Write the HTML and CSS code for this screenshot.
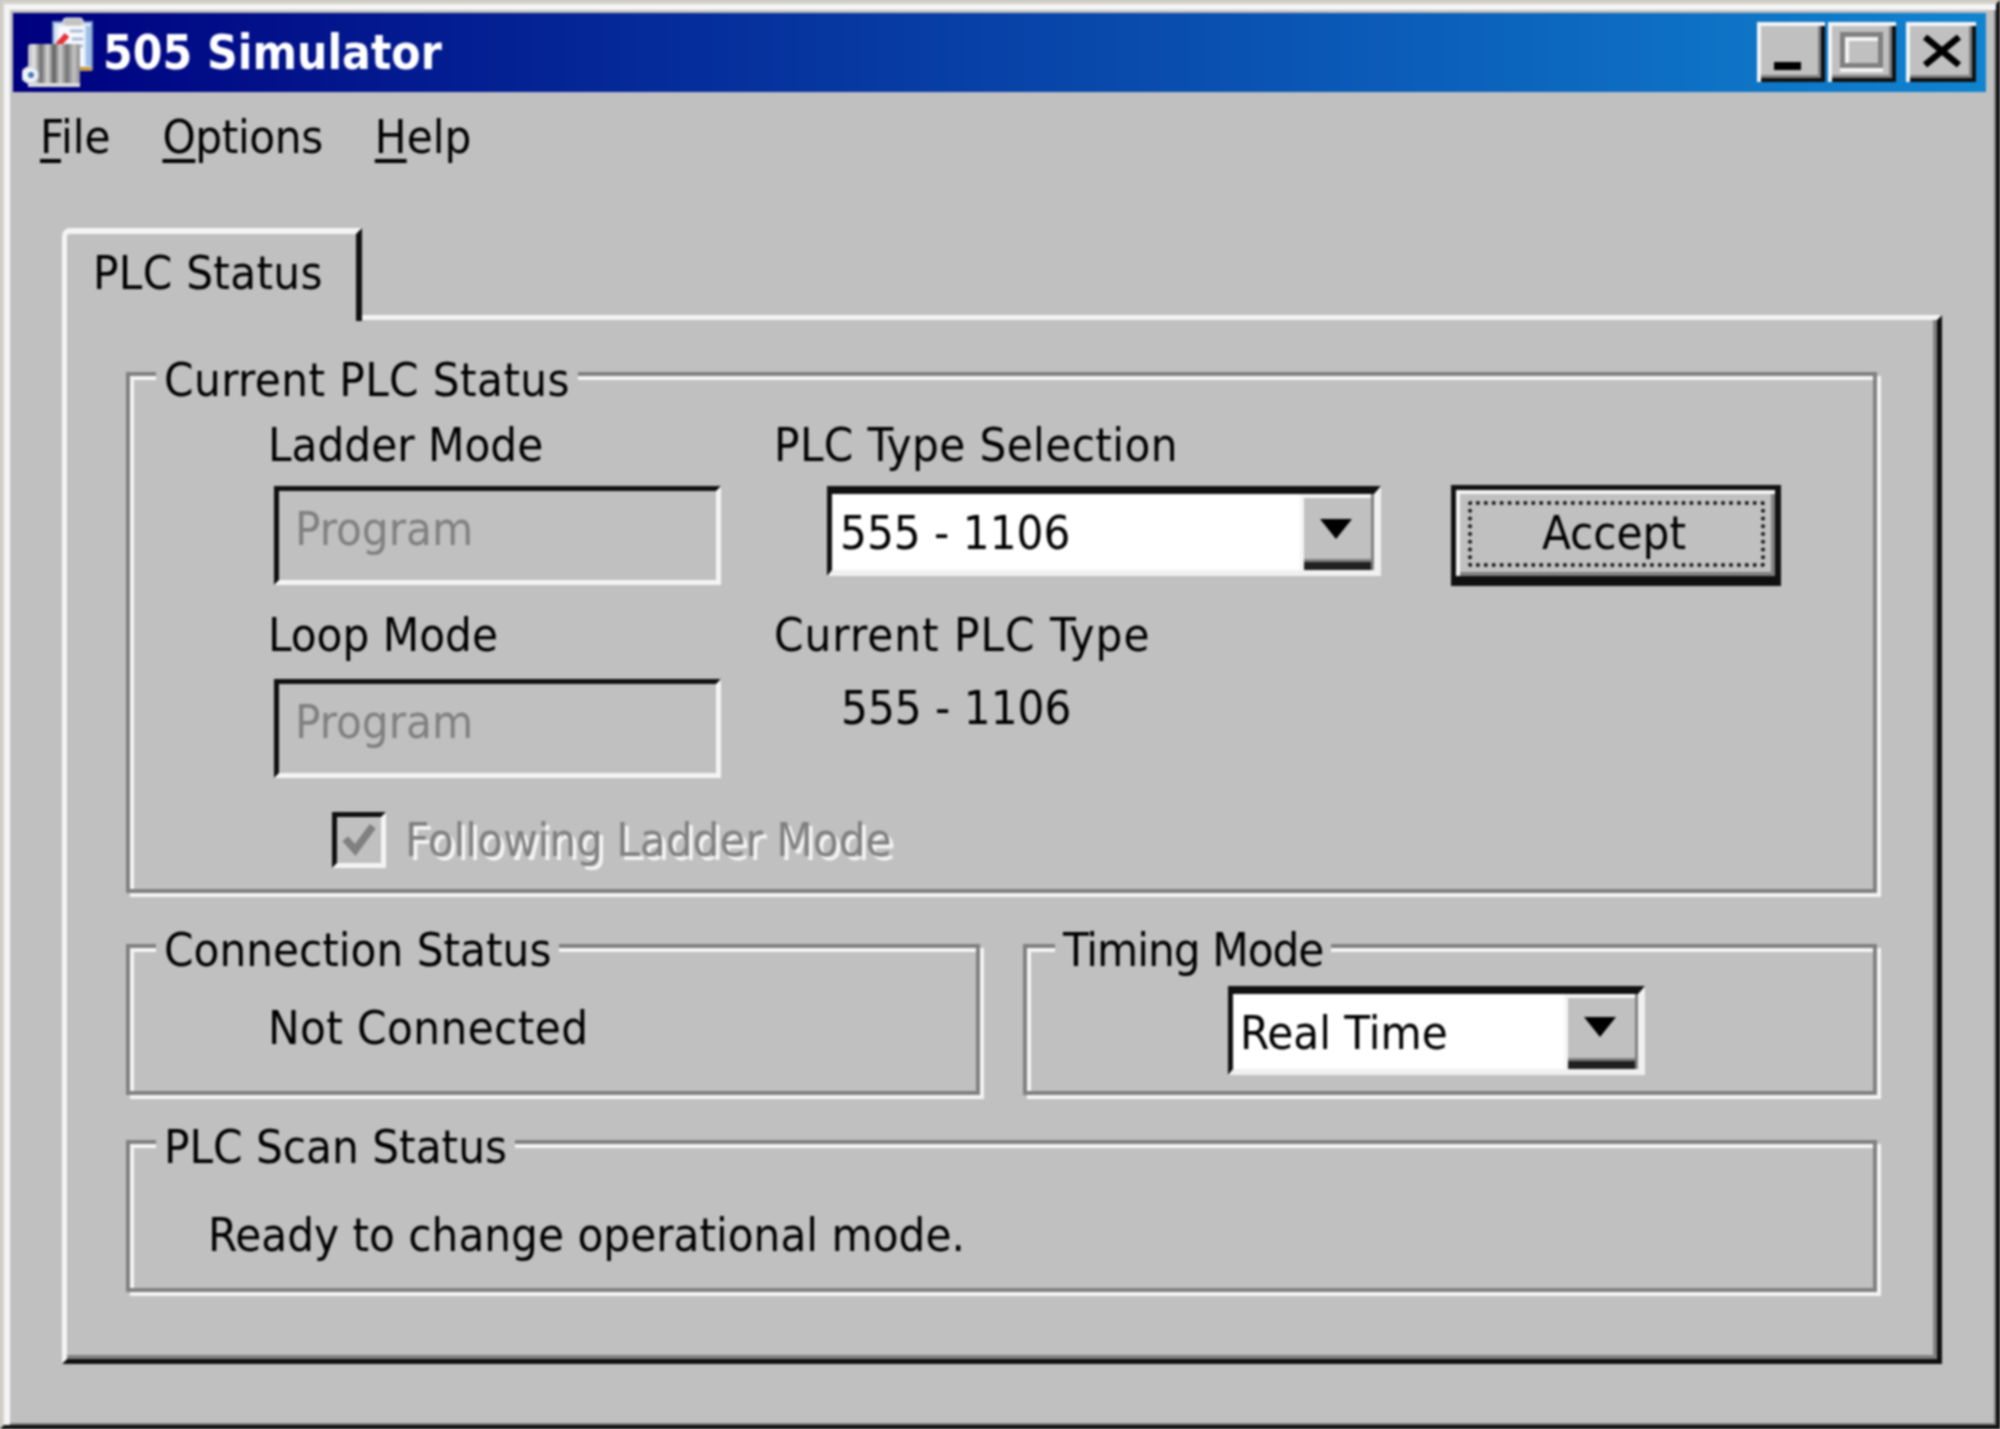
FILE: index.html
```html
<!DOCTYPE html>
<html lang="en">
<head>
<meta charset="utf-8">
<title>505 Simulator</title>
<link rel="stylesheet" href="styles.css">
</head>
<body>
<div class="window">
  <header class="titlebar">
    <svg class="app-icon" viewBox="0 0 72 72" aria-hidden="true">
      <defs>
        <linearGradient id="drum" x1="0" x2="1" y1="0" y2="0">
          <stop offset="0" stop-color="#b4b8bc"/>
          <stop offset=".12" stop-color="#e4e4e4"/>
          <stop offset=".25" stop-color="#6c6c6c"/>
          <stop offset=".38" stop-color="#d8d8d8"/>
          <stop offset=".5" stop-color="#5c5c5c"/>
          <stop offset=".62" stop-color="#cfcfcf"/>
          <stop offset=".75" stop-color="#707070"/>
          <stop offset=".88" stop-color="#c4c4c4"/>
          <stop offset="1" stop-color="#8c8c8c"/>
        </linearGradient>
      </defs>
      <rect x="31" y="5" width="39" height="47" fill="#d7e6f8" stroke="#6f8fc0" stroke-width="2"/>
      <rect x="36" y="9" width="26" height="40" fill="#f6f9fd"/>
      <rect x="64" y="9" width="5" height="40" fill="#9fc0e8"/>
      <rect x="41" y="1" width="20" height="8" rx="3" fill="#c4c4c4" stroke="#e8e8e8"/>
      <path d="M48 14h13M50 22h11M50 29h11" stroke="#a9bcd8" stroke-width="3"/>
      <path d="M36 28l9-10" stroke="#e8303a" stroke-width="6"/>
      <rect x="54" y="50" width="16" height="4" fill="#c89a40"/>
      <rect x="6" y="27" width="52" height="43" rx="3" fill="url(#drum)"/>
      <rect x="6" y="66" width="52" height="4" fill="#dcdcdc"/>
      <circle cx="8" cy="58" r="8" fill="#f2f5f8" stroke="#d0dae4" stroke-width="2"/>
      <circle cx="9" cy="58" r="3" fill="#4a78b8"/>
    </svg>
    <h1 class="title">505 Simulator</h1>
    <div class="caption-buttons">
      <div class="cap-btn"><span class="glyph-min"></span></div>
      <div class="cap-btn"><span class="glyph-max"></span></div>
      <div class="cap-btn cap-close">
        <svg class="glyph-close" viewBox="0 0 40 32" aria-hidden="true"><path d="M3 2l34 28M37 2L3 30" stroke="#000" stroke-width="6.5" fill="none"/></svg>
      </div>
    </div>
  </header>

  <nav class="menu">
    <span><u>F</u>ile</span>
    <span class="tight"><u>O</u>ptions</span>
    <span><u>H</u>elp</span>
  </nav>

  <div class="tab">PLC Status</div>

  <main class="panel">
    <fieldset class="group">
      <legend class="wide">Current PLC Status</legend>
      <div class="status-grid">
        <div class="label">Ladder Mode</div>
        <div class="label label-right wide">PLC Type Selection</div>
        <div></div>

        <div class="field">Program</div>
        <div class="combo combo-type">
          <span class="combo-text">555 - 1106</span>
          <span class="combo-btn"><span class="arrow"></span></span>
        </div>
        <button class="accept" type="button"><span class="focus">Accept</span></button>

        <div class="label">Loop Mode</div>
        <div class="label label-right wider">Current PLC Type</div>
        <div></div>

        <div class="field">Program</div>
        <div class="label current-type">555 - 1106</div>
        <div></div>

        <div class="check-row">
          <span class="checkbox">
            <svg viewBox="0 0 32 32" aria-hidden="true"><path d="M5 15l8 9L27 5" fill="none" stroke="#808080" stroke-width="6"/></svg>
          </span>
          <span class="check-label">Following Ladder Mode</span>
        </div>
      </div>
    </fieldset>

    <div class="pair">
      <fieldset class="group group-half">
        <legend>Connection Status</legend>
        <div class="conn-text">Not Connected</div>
      </fieldset>
      <fieldset class="group group-half">
        <legend class="legend-timing">Timing Mode</legend>
        <div class="combo combo-time">
          <span class="combo-text">Real Time</span>
          <span class="combo-btn"><span class="arrow"></span></span>
        </div>
      </fieldset>
    </div>

    <fieldset class="group group-scan">
      <legend>PLC Scan Status</legend>
      <div class="scan-text">Ready to change operational mode.</div>
    </fieldset>
  </main>
</div>
</body>
</html>
```

FILE: styles.css
```css
* { box-sizing: border-box; }

html, body { margin: 0; height: 100%; }

body {
  background: #c0c0c0;
  font-family: "DejaVu Sans Condensed", "DejaVu Sans", sans-serif;
  font-stretch: condensed;
  font-size: 47px;
  line-height: 50px;
  color: #000;
  overflow: hidden;
}

.window {
  height: 1429px;
  padding: 9px 10px 0 9px;
  background: #c0c0c0;
  border-style: solid;
  border-width: 4px;
  border-color: #d4d0c8 #101010 #101010 #d4d0c8;
  box-shadow: inset 6px 6px 0 #f4f4f4, inset -2px -2px 0 #808080;
  filter: blur(1.3px);
}

/* Title bar */
.titlebar {
  display: flex;
  align-items: center;
  height: 79px;
  padding-left: 9px;
  background: linear-gradient(90deg, #000080, #1084d0);
}

.app-icon { width: 72px; height: 72px; flex: none; }

.title {
  margin: 0 0 0 9px;
  font-size: 47.5px;
  font-weight: bold;
  line-height: 78px;
  color: #fff;
}

.caption-buttons {
  display: flex;
  margin-left: auto;
  margin-right: 10px;
  align-self: flex-start;
  margin-top: 9px;
}

.cap-btn {
  position: relative;
  width: 68px;
  height: 60px;
  margin-right: 3px;
  background: #c0c0c0;
  box-shadow: inset 4px 4px 0 #f4f4f4, inset -4px -4px 0 #101010, inset -7px -7px 0 #808080;
}

.cap-close { margin-left: 7px; margin-right: 0; width: 70px; }

.glyph-min {
  position: absolute;
  left: 17px;
  top: 40px;
  width: 27px;
  height: 8px;
  background: #000;
}

.glyph-max {
  position: absolute;
  left: 12px;
  top: 10px;
  width: 43px;
  height: 36px;
  border: 5px solid #808080;
  box-shadow: inset 4px 4px 0 #f4f4f4, 0 4px 0 #f4f4f4;
}

.glyph-close {
  position: absolute;
  left: 16px;
  top: 13px;
  width: 40px;
  height: 32px;
}

/* Menu */
.menu {
  display: flex;
  gap: 52px;
  height: 91px;
  padding: 20px 0 0 27px;
}

.tight { letter-spacing: -0.4px; }
.wide { letter-spacing: 0.4px; }
.wider { letter-spacing: 1px; }

u {
  text-decoration-thickness: 4px;
  text-underline-offset: 6px;
}

/* Tab */
.tab {
  position: relative;
  z-index: 1;
  width: 300px;
  height: 93px;
  margin: 45px 0 -6px 49px;
  padding: 14px 0 0 26px;
  letter-spacing: 0.3px;
  background: #c0c0c0;
  border-style: solid;
  border-width: 6px 6px 0 5px;
  border-color: #f4f4f4 #101010 #c0c0c0 #f4f4f4;
  border-top-left-radius: 8px;
}

/* Panel */
.panel {
  width: 1880px;
  height: 1049px;
  margin-left: 49px;
  padding: 35px 0 0 59px;
  border-style: solid;
  border-width: 5px;
  border-color: #f4f4f4 #101010 #101010 #f4f4f4;
  box-shadow: inset -4px -4px 0 #808080;
}

/* Etched groups */
.group {
  display: block;
  width: 1751px;
  margin: 0;
  padding: 0;
  min-width: 0;
  border: 4px solid #808080;
  box-shadow: 4px 4px 0 #f4f4f4, inset 4px 4px 0 #f4f4f4;
}

.group legend {
  margin-left: 26px;
  padding: 0 8px;
  height: 38px;
  background: #c0c0c0;
}

.group-half legend { height: 42px; }

.group-half .legend-timing {
  margin-left: 28px;
  letter-spacing: -1px;
}

.group-scan legend { height: 40px; }

/* Current status */
.status-grid {
  display: grid;
  grid-template-columns: 505px 678px 330px;
  grid-template-rows: 66px 124px 69px 133px 77px;
  padding: 27px 0 0 138px;
}

.label-right { margin-left: 1px; }

.field {
  width: 447px;
  height: 99px;
  margin-left: 6px;
  padding: 13px 0 0 16px;
  color: #808080;
  border-style: solid;
  border-width: 5px;
  border-color: #101010 #f4f4f4 #f4f4f4 #101010;
}

.combo {
  display: flex;
  background: #fff;
  border-style: solid;
  border-width: 8px 7px 6px 5px;
  border-color: #101010 #f0f0f0 #f0f0f0 #101010;
}

.combo-text { flex: 1; padding: 14px 0 0 7px; }

.combo-btn {
  display: flex;
  justify-content: center;
  width: 74px;
  padding-top: 25px;
  background: #c0c0c0;
  border-right: 3px solid #808080;
  box-shadow: inset 4px 4px 0 #f4f4f4, inset 0 -8px 0 #202020, inset 0 -11px 0 #808080;
}

.arrow {
  width: 0;
  height: 0;
  border-style: solid;
  border-width: 20px 16px 0 16px;
  border-color: #000 transparent transparent transparent;
}

.combo-type {
  width: 554px;
  height: 90px;
  margin-left: 54px;
}

.combo-type .combo-text { padding-left: 8px; }

.accept {
  width: 330px;
  height: 101px;
  margin-top: -1px;
  padding: 11px 10px 9px 12px;
  font: inherit;
  color: inherit;
  background: #c0c0c0;
  border-style: solid;
  border-width: 5px 6px 10px 5px;
  border-color: #101010;
  box-shadow: inset 4px 4px 0 #f4f4f4, inset -4px -4px 0 #808080;
}

.focus {
  display: block;
  height: 100%;
  padding-right: 5px;
  line-height: 56px;
  border: 4px dotted #101010;
  border-radius: 4px;
}

.current-type { margin-left: 68px; margin-top: 4px; }

.check-row {
  grid-column: 1 / -1;
  display: flex;
  align-items: center;
  align-self: start;
  gap: 19px;
  margin-left: 64px;
}

.checkbox {
  display: block;
  width: 54px;
  height: 56px;
  padding: 2px;
  border-style: solid;
  border-width: 5px;
  border-color: #101010 #f4f4f4 #f4f4f4 #101010;
}

.checkbox svg { display: block; width: 100%; height: 100%; }

.check-label {
  color: #808080;
  text-shadow: 4px 4px 0 #f4f4f4;
}

/* Connection + timing */
.pair {
  display: flex;
  gap: 43px;
  margin-top: 32px;
}

.group-half { width: 854px; height: 170px; }

.conn-text { padding: 36px 0 0 138px; letter-spacing: 0.4px; }

.combo-time {
  width: 417px;
  height: 89px;
  margin: 19px 0 0 201px;
}

.combo-time .combo-btn { padding-top: 23px; }

.group-scan {
  margin-top: 27px;
  height: 170px;
}

.scan-text { padding: 48px 0 0 78px; }
```
